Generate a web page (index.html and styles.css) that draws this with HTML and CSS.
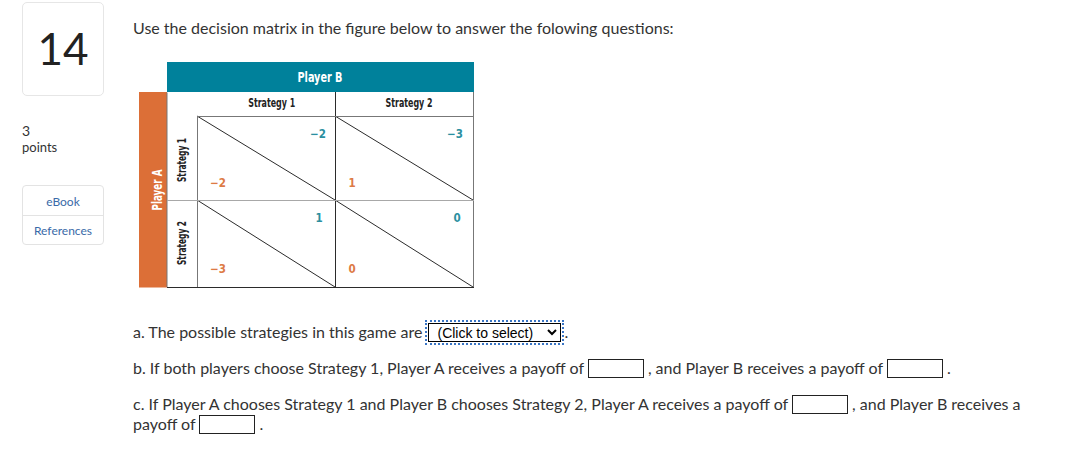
FILE: index.html
```html
<!DOCTYPE html>
<html>
<head>
<meta charset="utf-8">
<link rel="stylesheet" href="styles.css">
</head>
<body>
<div class="page">
  <aside class="side">
    <div class="qnum">14</div>
    <div class="points"><div class="pts-n">3</div><div class="pts-l">points</div></div>
    <div class="links">
      <div class="link">eBook</div>
      <div class="link">References</div>
    </div>
  </aside>
  <main class="main">
    <p class="intro">Use the decision matrix in the figure below to answer the folowing questions:</p>
    <svg class="matrix" width="336" height="226" viewBox="0 0 336 226">
      <rect x="28" y="0" width="307" height="30" fill="#00819b"/>
      <rect x="0" y="30" width="28" height="195.5" fill="#dc6f37"/>
      <g stroke="#2b2b2b" stroke-width="1" fill="none">
        <line x1="196.5" y1="30" x2="196.5" y2="225"/>
        <line x1="28" y1="225.5" x2="335" y2="225.5"/>
        <line x1="58" y1="54" x2="196" y2="138"/>
        <line x1="196" y1="54" x2="334" y2="138"/>
        <line x1="58" y1="138" x2="196" y2="225"/>
        <line x1="196" y1="138" x2="334" y2="225"/>
      </g>
      <g stroke="#777" stroke-width="1" fill="none">
        <line x1="334.5" y1="30" x2="334.5" y2="225"/>
        <line x1="58.5" y1="54" x2="58.5" y2="225"/>
        <line x1="58" y1="54.5" x2="334" y2="54.5"/>
        <line x1="28" y1="30.5" x2="28" y2="225"/>
      </g>
      <line x1="28" y1="138.5" x2="335" y2="138.5" stroke="#a8a8a8" stroke-width="1.2"/>
      <g class="lbl">
        <text x="181" y="19.5" class="hdr" text-anchor="middle" textLength="45" lengthAdjust="spacingAndGlyphs">Player B</text>
        <text x="132.7" y="45" text-anchor="middle" textLength="47" lengthAdjust="spacingAndGlyphs">Strategy 1</text>
        <text x="270" y="45" text-anchor="middle" textLength="47" lengthAdjust="spacingAndGlyphs">Strategy 2</text>
        <text transform="translate(46.5 98) rotate(-90)" text-anchor="middle" textLength="44" lengthAdjust="spacingAndGlyphs">Strategy 1</text>
        <text transform="translate(46.5 181) rotate(-90)" text-anchor="middle" textLength="44" lengthAdjust="spacingAndGlyphs">Strategy 2</text>
        <text transform="translate(23 128) rotate(-90)" class="hdr" text-anchor="middle" textLength="41" lengthAdjust="spacingAndGlyphs">Player A</text>
      </g>
      <g class="num">
        <text x="179" y="76" class="pb" text-anchor="middle">−2</text>
        <text x="79" y="125" class="pa" text-anchor="middle">−2</text>
        <text x="316" y="76" class="pb" text-anchor="middle">−3</text>
        <text x="213" y="125" class="pa" text-anchor="middle">1</text>
        <text x="180" y="160" class="pb" text-anchor="middle">1</text>
        <text x="79" y="211" class="pa" text-anchor="middle">−3</text>
        <text x="318" y="160" class="pb" text-anchor="middle">0</text>
        <text x="213" y="211" class="pa" text-anchor="middle">0</text>
      </g>
    </svg>
    <div class="questions">
      <p class="q qa">a. The possible strategies in this game are <span class="sel-wrap"><select class="sel"><option>(Click to select)</option></select></span>.</p>
      <p class="q">b. If both players choose Strategy 1, Player A receives a payoff of <span class="box"></span> , and Player B receives a payoff of <span class="box"></span> .</p>
      <p class="q">c. If Player A chooses Strategy 1 and Player B chooses Strategy 2, Player A receives a payoff of <span class="box"></span> , and Player B receives a payoff of <span class="box"></span> .</p>
    </div>
  </main>
</div>
</body>
</html>
```

FILE: styles.css
```css
* { box-sizing: border-box; }
body {
  margin: 0;
  background: #fff;
  font-family: Lato, "Open Sans", sans-serif;
  color: #333;
}
.page {
  display: flex;
  width: 1070px;
  height: 459px;
}
.side {
  width: 133px;
  padding-left: 22px;
  padding-top: 2px;
  flex: none;
}
.qnum {
  width: 82px;
  height: 94px;
  border: 1px solid #e6e6e6;
  border-radius: 5px;
  display: flex;
  align-items: center;
  justify-content: center;
  font-size: 44px;
  color: #222;
  padding-bottom: 2px;
}
.points {
  margin-top: 27px;
  font-size: 13px;
  line-height: 16px;
  color: #333;
}
.pts-n { font-size: 14px; }
.links {
  margin-top: 30px;
  width: 82px;
  border: 1px solid #e3e3e3;
  border-radius: 4px;
}
.link {
  height: 29px;
  padding-top: 1px;
  display: flex;
  align-items: center;
  justify-content: center;
  font-size: 12px;
  color: #3a6aa8;
}
.link + .link { border-top: 1px solid #e3e3e3; }
.main {
  flex: 1;
  padding-top: 18px;
}
.intro {
  margin: 0;
  font-size: 16px;
  line-height: 20px;
}
.matrix {
  display: block;
  margin: 24px 0 0 6px;
}
.lbl text {
  font-family: "DejaVu Sans Condensed", "DejaVu Sans", sans-serif;
  font-weight: bold;
  font-size: 11.5px;
  fill: #222;
}
.lbl text.hdr {
  fill: #fff;
  font-size: 13.5px;
}
.num text {
  font-family: "DejaVu Sans Condensed", "DejaVu Sans", sans-serif;
  font-weight: bold;
  font-size: 11.5px;
}
.pa { fill: #dd7a45; }
.pb { fill: #2b8fa0; }
.questions {
  margin-top: 34px;
  width: 910px;
}
.q {
  margin: 0 0 16px;
  font-size: 16px;
  line-height: 19px;
}
.sel-wrap {
  display: inline-block;
  outline: 2px dotted #3a75c4;
  outline-offset: 1px;
  vertical-align: middle;
  line-height: 0;
  margin-top: -3px;
  margin-left: 2px;
  margin-right: 3px;
}
.sel {
  font-family: "Liberation Sans", Arial, sans-serif;
  font-size: 14px;
  color: #000;
  width: 133px;
  height: 19px;
  border: 1px solid #000;
  border-radius: 0;
  background: #fff;
  padding: 0 0 0 4px;
  margin: 0;
}
.box {
  display: inline-block;
  width: 56px;
  height: 19px;
  border: 1px solid #222;
  vertical-align: -4px;
  background: #fff;
}
```
